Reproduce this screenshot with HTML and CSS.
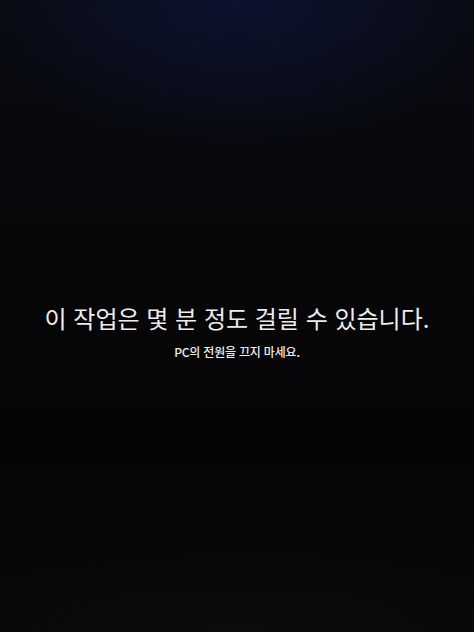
FILE: index.html
```html
<!DOCTYPE html>
<html lang="ko">
<head>
<meta charset="utf-8">
<link rel="stylesheet" href="styles.css">
</head>
<body>
<main class="screen">
  <div class="message">
    <p class="title">이 작업은 몇 분 정도 걸릴 수 있습니다.</p>
    <p class="note">PC의 전원을 끄지 마세요.</p>
  </div>
</main>
</body>
</html>
```
FILE: styles.css
```css
html, body {
  margin: 0;
  padding: 0;
  height: 100%;
}
body {
  background: #060608;
}
.screen {
  height: 632px;
  width: 474px;
  display: flex;
  flex-direction: column;
  align-items: center;
  background:
    radial-gradient(ellipse 260px 150px at 50% 0%, rgba(14, 22, 60, 0.7), rgba(14, 22, 60, 0) 100%),
    radial-gradient(ellipse 320px 90px at 50% 100%, rgba(18, 14, 10, 0.6), rgba(18, 14, 10, 0) 100%),
    linear-gradient(180deg, #090b12 0%, #070709 40%, #050506 70%, #080807 100%);
  font-family: "Noto Sans CJK KR", "Noto Sans", sans-serif;
  color: #ededed;
}
.message {
  margin-top: 300px;
  display: flex;
  flex-direction: column;
  align-items: center;
}
.title {
  margin: 0;
  font-size: 24px;
  line-height: 36px;
  font-weight: 400;
  white-space: nowrap;
}
.note {
  margin: 8px 0 0;
  font-size: 12px;
  line-height: 16px;
  font-weight: 500;
  letter-spacing: -0.2px;
  white-space: nowrap;
}
```
